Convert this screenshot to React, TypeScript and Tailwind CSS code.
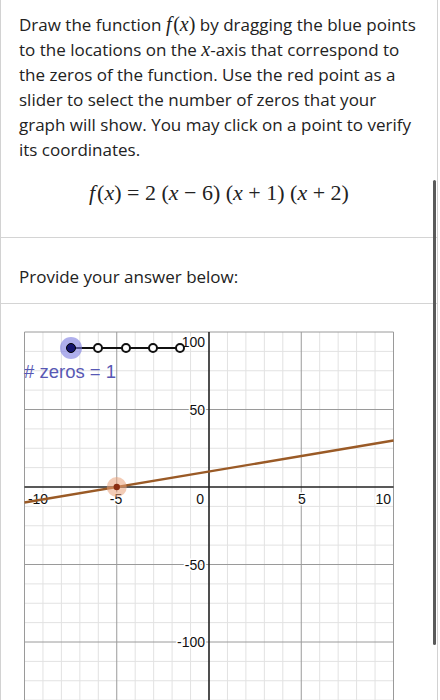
import React from "react";

const X = (x: number) => 209 + 18.45 * x;
const Y = (y: number) => 487 - 1.55 * y;

function Graph() {
  const minorX: number[] = [];
  for (let i = -10; i <= 10; i++) if (i % 5 !== 0) minorX.push(i);
  const majorX = [-10, -5, 5, 10];
  const minorY: number[] = [];
  for (let v = -150; v <= 100; v += 12.5) if (v % 50 !== 0) minorY.push(v);
  const majorY = [-150, -100, -50, 50, 100];
  const top = Y(100);
  const bottom = 704;
  const left = X(-10);
  const right = X(10);
  const label = {
    fontFamily: '"Liberation Sans", Arial, sans-serif',
    fontSize: 14,
    fill: "#111",
    stroke: "#fff",
    strokeWidth: 3,
    paintOrder: "stroke" as const,
  };
  const sliderXs = [71, 98, 126, 153, 180];
  return (
    <svg
      width={436}
      height={396}
      viewBox="1 304 436 396"
      className="block"
    >
      {minorX.map((i) => (
        <line key={"mx" + i} x1={X(i)} x2={X(i)} y1={top} y2={bottom} stroke="#e2e2e2" strokeWidth={1} />
      ))}
      {minorY.map((v) => (
        <line key={"my" + v} x1={left} x2={right} y1={Y(v)} y2={Y(v)} stroke="#e2e2e2" strokeWidth={1} />
      ))}
      {majorX.map((i) => (
        <line key={"Mx" + i} x1={X(i)} x2={X(i)} y1={top} y2={bottom} stroke="#9a9a9a" strokeWidth={1} />
      ))}
      {majorY.map((v) => (
        <line key={"My" + v} x1={left} x2={right} y1={Y(v)} y2={Y(v)} stroke="#9a9a9a" strokeWidth={1} />
      ))}
      {/* axes */}
      <line x1={left} x2={right} y1={Y(0)} y2={Y(0)} stroke="#222" strokeWidth={1.6} />
      <line x1={X(0)} x2={X(0)} y1={top} y2={bottom} stroke="#222" strokeWidth={1.6} />

      {/* axis labels */}
      <text x={205} y={347} textAnchor="end" {...label}>100</text>
      <text x={205} y={Y(50) + 5} textAnchor="end" {...label}>50</text>
      <text x={205} y={Y(-50) + 5} textAnchor="end" {...label}>-50</text>
      <text x={205} y={Y(-100) + 5} textAnchor="end" {...label}>-100</text>
      <text x={204} y={504} textAnchor="end" {...label}>0</text>
      <text x={38} y={504} textAnchor="middle" {...label}>-10</text>
      <text x={116} y={504} textAnchor="middle" {...label}>-5</text>
      <text x={302} y={504} textAnchor="middle" {...label}>5</text>
      <text x={391} y={504} textAnchor="end" {...label}>10</text>

      {/* function line */}
      <line x1={left} y1={Y(-10)} x2={right} y2={Y(30)} stroke="#9a5a26" strokeWidth={2.4} />

      {/* red zero point */}
      <circle cx={X(-5)} cy={Y(0)} r={10} fill="#e9a27a" opacity={0.55} />
      <circle cx={X(-5)} cy={Y(0)} r={3.2} fill="#8a2e12" />

      {/* slider */}
      <line x1={71} x2={180} y1={348} y2={348} stroke="#111" strokeWidth={2} />
      <circle cx={71} cy={348} r={11} fill="#7a7ae0" opacity={0.6} />
      <circle cx={71} cy={348} r={4.5} fill="#14146e" stroke="#000" strokeWidth={1} />
      {sliderXs.slice(1).map((sx) => (
        <circle key={sx} cx={sx} cy={348} r={4} fill="#fff" stroke="#111" strokeWidth={2} />
      ))}
      <text
        x={24}
        y={377.5}
        fontFamily='"Liberation Sans", Arial, sans-serif'
        fontSize={18.5}
        fill="#5858b4"
      >
        # zeros = 1
      </text>
    </svg>
  );
}

export default function App() {
  const serif = { fontFamily: '"Liberation Serif", "Times New Roman", serif' };
  return (
    <div className="relative w-[438px] h-[700px] overflow-hidden bg-white border-l border-r border-[#d2d2d2] text-[#222]" style={{ fontFamily: '"Open Sans", sans-serif' }}>
      <div className="pl-[18px] pr-[14px] pt-[12px] pb-[26px]">
        <p className="text-[17px] leading-[25px]">
          Draw the function{" "}
          <span className="text-[20px]" style={serif}>
            <i>f</i>&#8202;(<i>x</i>)
          </span>{" "}
          by dragging the blue points to the locations on the{" "}
          <i className="text-[20px]" style={serif}>x</i>-axis that correspond to the zeros of the function. Use the red point as a slider to select the number of zeros that your graph will show. You may click on a point to verify its coordinates.
        </p>
        <div className="mt-[13px] text-center text-[22px] leading-[36px] pr-[4px]" style={serif}>
          <i>f</i>&#8202;(<i>x</i>) = 2 (<i>x</i> − 6) (<i>x</i> + 1) (<i>x</i> + 2)
        </div>
      </div>
      <div className="border-t border-[#d4d4d4]" />
      <div className="px-[18px] pt-[26px] pb-[14px] text-[17px] leading-[25px]">
        Provide your answer below:
      </div>
      <div className="border-t border-[#d4d4d4]" />
      <Graph />
      <div className="absolute left-[432px] top-[180px] w-[3px] h-[465px] bg-[#5a5a5a] rounded-sm" />
    </div>
  );
}
